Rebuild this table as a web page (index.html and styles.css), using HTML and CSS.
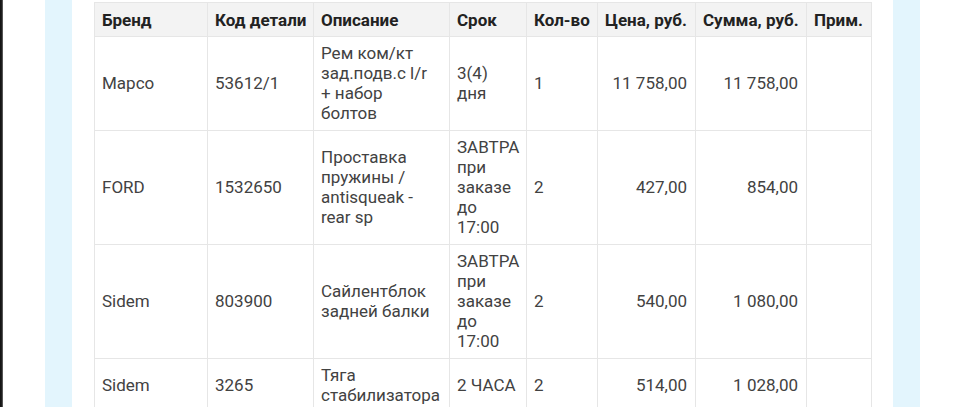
FILE: index.html
```html
<!DOCTYPE html>
<html lang="ru">
<head>
<meta charset="utf-8">
<title>Заказ</title>
<link rel="stylesheet" href="styles.css">
</head>
<body>
<div class="screen">
  <div class="edge"></div>
  <div class="frame">
    <table class="order">
      <colgroup>
        <col class="c-brand"><col class="c-code"><col class="c-desc"><col class="c-term"><col class="c-qty"><col class="c-price"><col class="c-sum"><col class="c-note">
      </colgroup>
      <thead>
        <tr>
          <th>Бренд</th><th>Код детали</th><th>Описание</th><th>Срок</th><th>Кол-во</th><th>Цена, руб.</th><th>Сумма, руб.</th><th>Прим.</th>
        </tr>
      </thead>
      <tbody>
        <tr>
          <td>Mapco</td><td>53612/1</td><td class="desc">Рем ком/кт зад.подв.с l/r + набор болтов</td><td>3(4) дня</td><td>1</td><td class="num">11 758,00</td><td class="num">11 758,00</td><td></td>
        </tr>
        <tr>
          <td>FORD</td><td>1532650</td><td class="desc">Проставка пружины / antisqueak - rear sp</td><td>ЗАВТРА при заказе до 17:00</td><td>2</td><td class="num">427,00</td><td class="num">854,00</td><td></td>
        </tr>
        <tr>
          <td>Sidem</td><td>803900</td><td class="desc">Сайлентблок задней балки</td><td>ЗАВТРА при заказе до 17:00</td><td>2</td><td class="num">540,00</td><td class="num">1 080,00</td><td></td>
        </tr>
        <tr>
          <td>Sidem</td><td>3265</td><td class="desc">Тяга стабилизатора</td><td>2 ЧАСА</td><td>2</td><td class="num">514,00</td><td class="num">1 028,00</td><td></td>
        </tr>
      </tbody>
    </table>
  </div>
</div>
</body>
</html>
```
FILE: styles.css
```css
html, body {
  margin: 0;
  padding: 0;
  background: #ffffff;
  overflow: hidden;
}
.screen {
  display: flex;
  height: 407px;
  width: 960px;
  overflow: hidden;
  font-family: Roboto, "Noto Sans", sans-serif;
}
.edge {
  width: 3px;
  flex: none;
  background: linear-gradient(to right, #111 0, #222 2px, #888 3px);
}
.frame {
  flex: none;
  margin-left: 42px;
  width: 777px;
  height: 405px;
  border-left: 27px solid #e3f5fd;
  border-right: 27px solid #e3f5fd;
  border-bottom: 2px solid #eef8fc;
  background: #ffffff;
  padding: 2px 22px 0 22px;
  box-sizing: content-box;
  overflow: hidden;
}
.order {
  border-collapse: collapse;
  table-layout: fixed;
  width: 777px;
  font-size: 17px;
  line-height: 20px;
  color: #424242;
}
.c-brand { width: 113px; }
.c-code { width: 106px; }
.c-desc { width: 136px; }
.c-term { width: 77px; }
.c-qty { width: 71px; }
.c-price { width: 98px; }
.c-sum { width: 111px; }
.c-note { width: 65px; }
.order th,
.order td {
  border: 1px solid #e6e6e6;
  padding: 6px 7px 7px 7px;
  text-align: left;
  vertical-align: middle;
}
.order th {
  padding-top: 7px;
  padding-bottom: 6px;
  background: #f3f3f3;
  font-weight: 700;
  color: #222222;
  white-space: nowrap;
}
.order td.desc {
  padding-right: 14px;
}
.order td.num {
  text-align: right;
  padding-right: 8px;
}
```
